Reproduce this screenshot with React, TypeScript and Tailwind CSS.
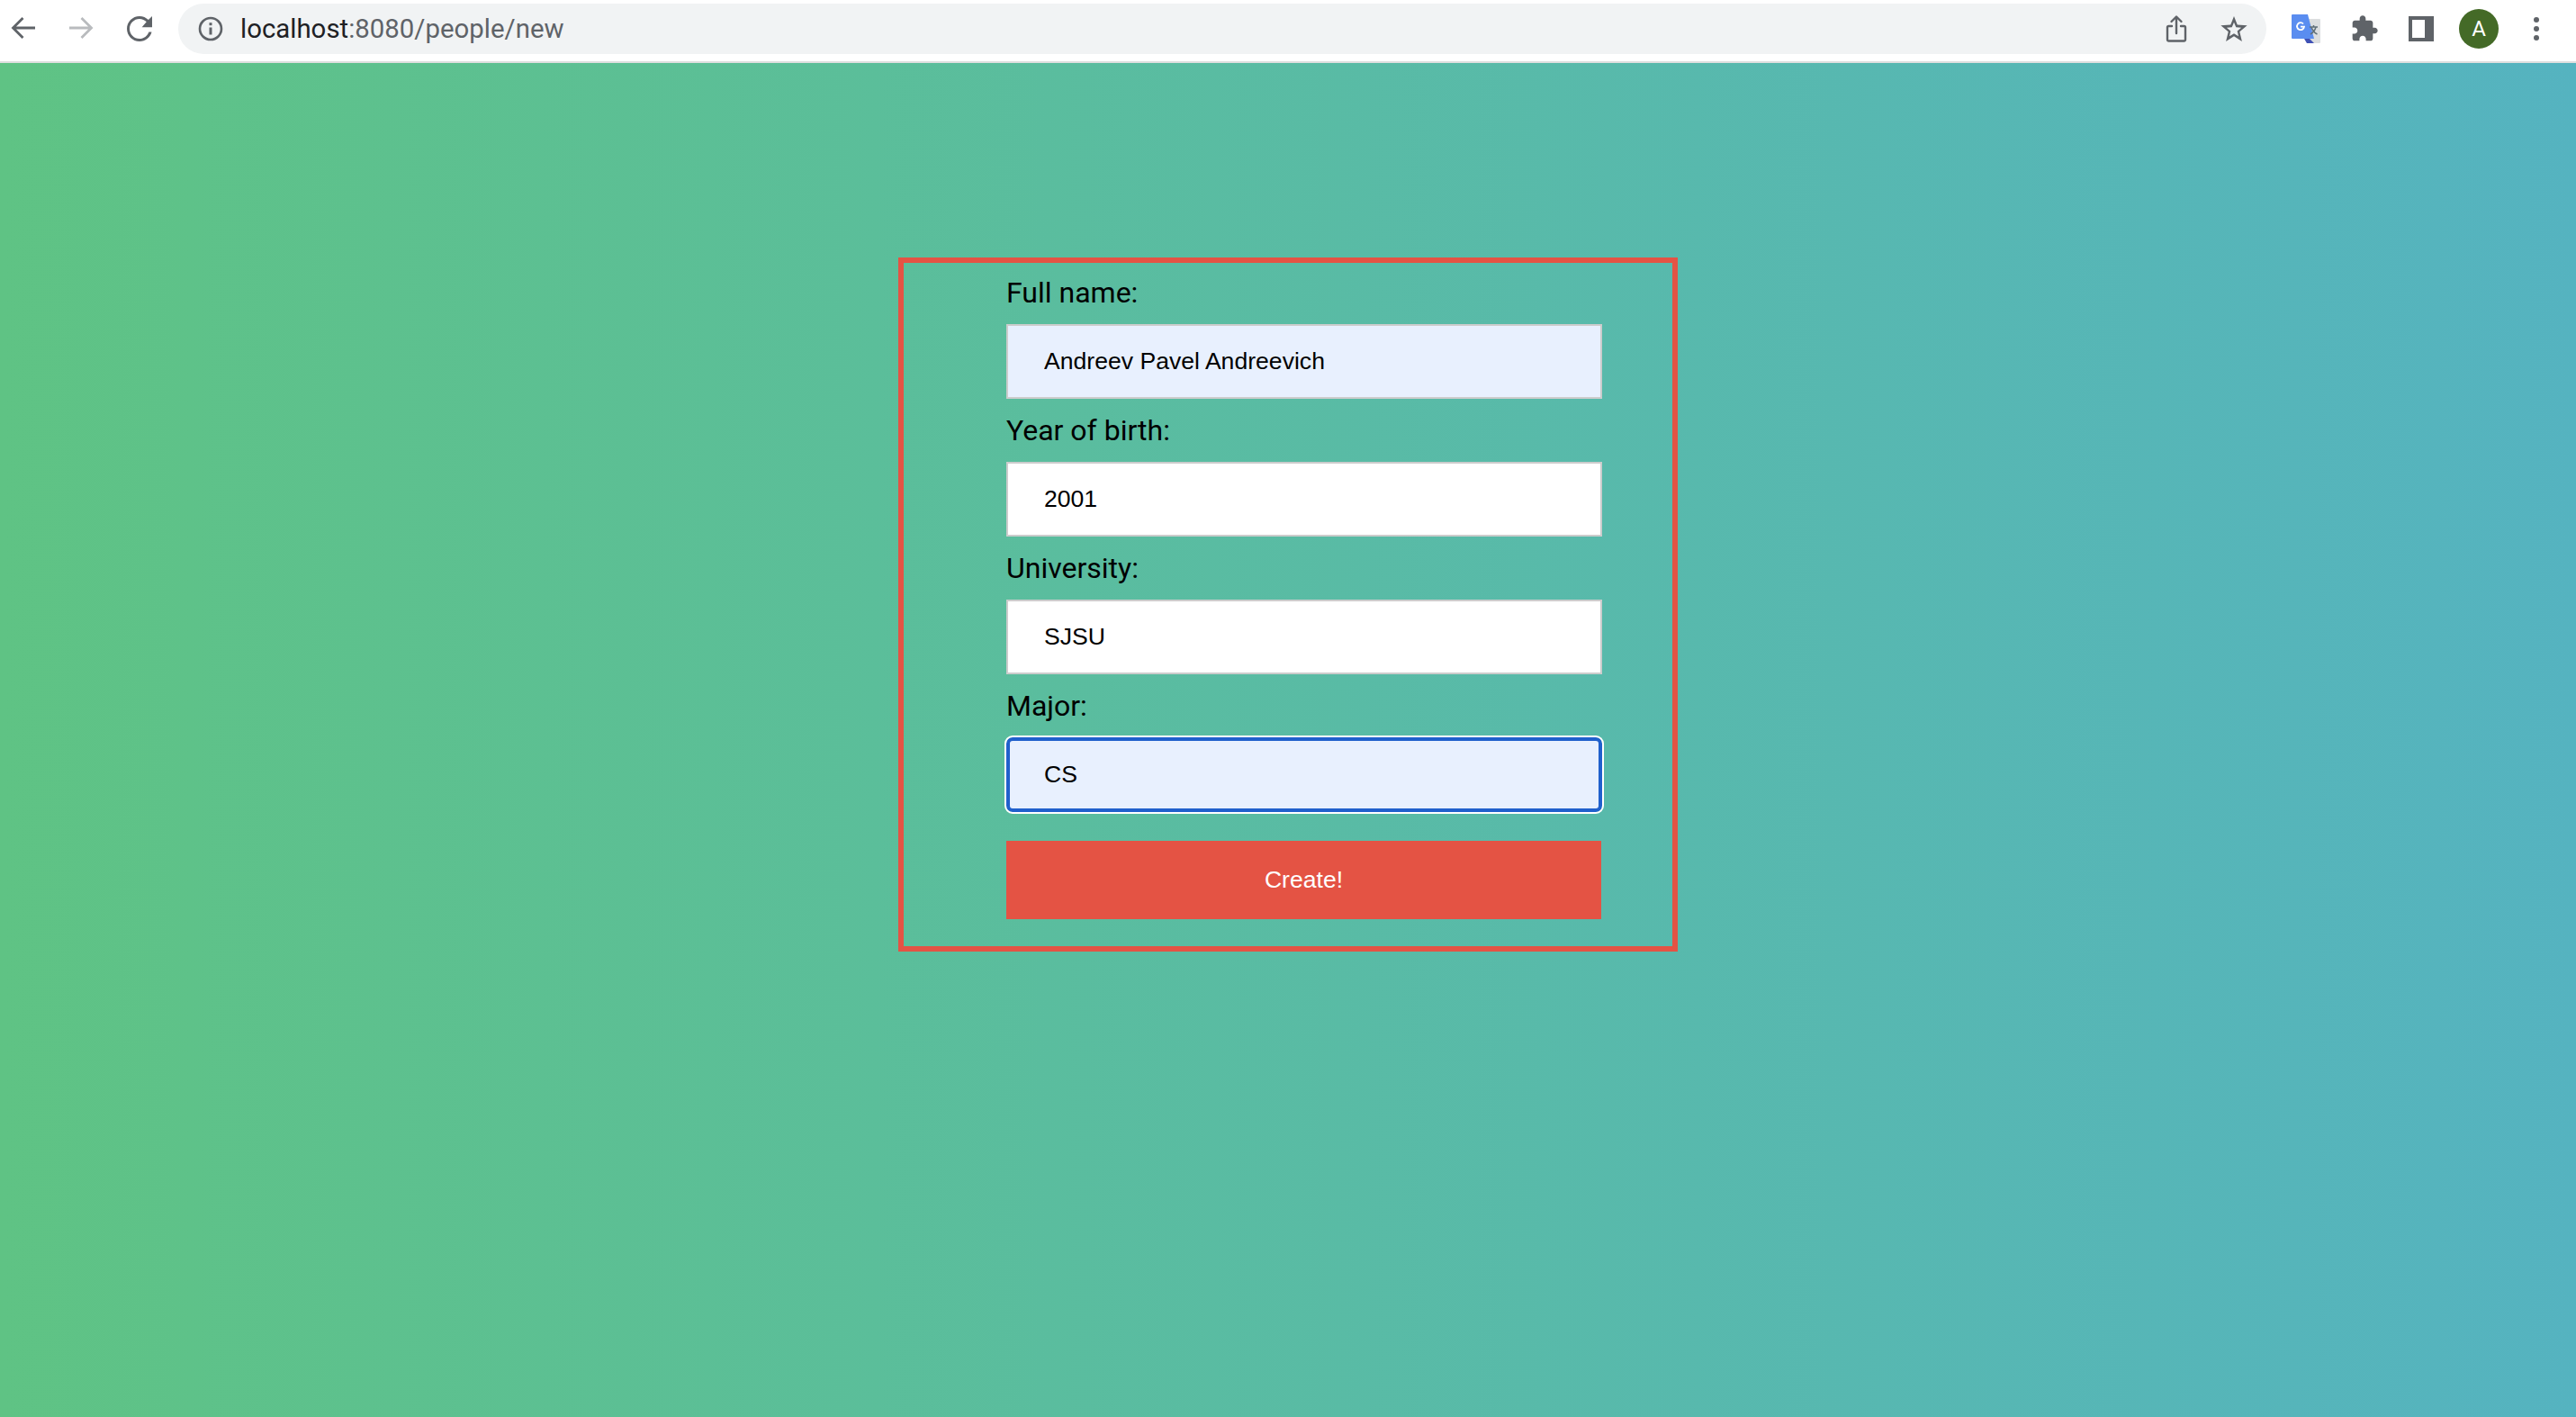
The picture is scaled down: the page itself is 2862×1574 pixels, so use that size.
const fields = [
  { label: 'Full name:', value: 'Andreev Pavel Andreevich', autofilled: true },
  { label: 'Year of birth:', value: '2001', autofilled: false },
  { label: 'University:', value: 'SJSU', autofilled: false },
];

function Toolbar() {
  return (
    <div className="flex h-[70px] items-start border-b-2 border-[#dfdfdf] bg-white">
      <div className="flex h-[68px] w-full items-center pb-1 pl-[10px] pr-[38px]">
        {/* back */}
        <svg viewBox="0 0 32 32" className="h-8 w-8 fill-none stroke-[#5f6368]" strokeWidth="2.8">
          <path d="M29 15H5M15.500 4 4.500 15l11 11" />
        </svg>
        {/* forward */}
        <svg viewBox="0 0 32 32" className="ml-8 h-8 w-8 fill-none stroke-[#b9bbbe]" strokeWidth="2.8">
          <path d="M3 15h24M16.500 4l11 11-11 11" />
        </svg>
        {/* reload */}
        <svg viewBox="4 4 16 16" className="ml-[35px] h-7 w-7 fill-[#5f6368]">
          <path d="M17.650 6.350C16.200 4.900 14.210 4 12 4c-4.420 0-7.990 3.580-7.990 8s3.570 8 7.990 8c3.730 0 6.840-2.550 7.730-6h-1.800c-.82 2.500-3.200 4.300-5.930 4.300-3.480 0-6.300-2.820-6.300-6.300s2.820-6.300 6.300-6.300c1.740 0 3.300.72 4.430 1.870L13.500 11H20V4l-2.350 2.350z" />
        </svg>

        {/* address bar */}
        <div className="ml-[29px] flex h-14 flex-1 items-center rounded-[28px] bg-[#f1f3f4] pl-[22px] pr-5">
          <svg viewBox="0 0 28 28" className="h-7 w-7 fill-none stroke-[#5f6368]">
            <circle cx="14" cy="14" r="12" strokeWidth="2.6" />
            <path d="M14 12.500v8" strokeWidth="3" />
            <path d="M14 7.200v3" strokeWidth="3" />
          </svg>
          <span className="ml-[19px] pt-[2px] font-['Roboto',sans-serif] text-[29.400px] leading-none text-[#202124]">
            localhost<span className="text-[#5f6368]">:8080/people/new</span>
          </span>
          <svg viewBox="0 0 32 32" className="ml-auto h-8 w-8 fill-none stroke-[#5f6368]" strokeWidth="2.4" strokeLinecap="round" strokeLinejoin="round">
            <path d="M11 13H7.500A1.500 1.500 0 0 0 6 14.500V28a1.500 1.500 0 0 0 1.500 1.500h17A1.500 1.500 0 0 0 26 28V14.500A1.500 1.500 0 0 0 24.500 13H21" />
            <path d="M16 21V3M10.500 8 16 2.500 21.500 8" />
          </svg>
          <svg viewBox="0 0 24 24" className="ml-8 h-8 w-8 fill-[#5f6368]">
            <path d="M23 9.240l-8.190-.62L12 1.500 9.190 8.620 1 9.240l6.260 5.230L5.320 22.500 12 18.270l6.680 4.230-1.940-8.030L23 9.240zM12 15.900l-3.760 2.270 1-4.280-3.320-2.880 4.380-.38L12 6.600l1.710 4.040 4.380.38-3.320 2.880 1 4.280L12 15.900z" />
          </svg>
        </div>

        {/* google translate */}
        <svg viewBox="0 0 32 32" className="ml-7 h-8 w-8">
          <path d="M14 5h17a1 1 0 0 1 1 1v25a1 1 0 0 1-1 1H17z" fill="#dcdedf" />
          <path d="M17 32h8l-5-5h-6z" fill="#3f51b5" />
          <path d="M1 0h17l7 27H1a1 1 0 0 1-1-1V1a1 1 0 0 1 1-1z" fill="#5a8df0" />
          <path d="M13 10.500a4 4 0 1 0 1 3.200h-4" fill="none" stroke="#fff" strokeWidth="1.800" />
          <path d="M20 14h9M24.500 12v2M27 14c-1 4-3.500 6.500-6 8M22 14c1 3.500 3.500 6.500 6.500 8" fill="none" stroke="#5f6f78" strokeWidth="1.500" />
        </svg>
        {/* extensions */}
        <svg viewBox="0 0 24 24" className="ml-[33px] h-8 w-8 fill-[#5f6368]">
          <path d="M20.500 11H19V7c0-1.100-.9-2-2-2h-4V3.500C13 2.120 11.880 1 10.500 1S8 2.120 8 3.500V5H4c-1.100 0-1.990.9-1.990 2v3.800H3.500c1.490 0 2.700 1.210 2.700 2.700s-1.210 2.700-2.700 2.700H2V20c0 1.100.9 2 2 2h3.800v-1.500c0-1.490 1.210-2.700 2.700-2.700 1.490 0 2.700 1.210 2.700 2.700V22H17c1.100 0 2-.9 2-2v-4h1.500c1.380 0 2.500-1.120 2.500-2.500S21.880 11 20.500 11z" />
        </svg>
        {/* side panel */}
        <svg viewBox="0 0 32 32" className="ml-[31px] h-8 w-8">
          <path d="M2 2h28v28H2z" fill="#5f6368" />
          <path d="M6 6h14v20H6z" fill="#fff" />
        </svg>
        {/* avatar */}
        <div className="ml-[26px] flex h-11 w-11 items-center justify-center rounded-full bg-[#446a27] font-['Roboto',sans-serif] text-[24px] leading-none text-white">
          A
        </div>
        {/* menu */}
        <div className="ml-9 flex w-3 flex-col items-center gap-1">
          <span className="h-[6px] w-[6px] rounded-full bg-[#5f6368]" />
          <span className="h-[6px] w-[6px] rounded-full bg-[#5f6368]" />
          <span className="h-[6px] w-[6px] rounded-full bg-[#5f6368]" />
        </div>
      </div>
    </div>
  );
}

export default function App() {
  return (
    <div className="flex h-[1574px] w-[2862px] flex-col overflow-hidden">
      <Toolbar />
      <main className="flex-1 bg-gradient-to-r from-[#5fc384] to-[#55b3c0] pt-[216px]">
        <form className="mx-auto h-[771px] w-[866px] border-[6px] border-[#e45344] pl-[114px]">
          {fields.map(f => (
            <div key={f.label}>
              <label className="flex h-[68px] items-center pb-[2px] font-['Roboto',sans-serif] text-[32px] leading-none text-black">
                {f.label}
              </label>
              <input
                readOnly
                defaultValue={f.value}
                className={`mb-[2px] block h-[83px] w-[662px] border-2 border-[#cccccc] pl-10 font-['Liberation_Sans',sans-serif] text-[26.600px] text-black outline-none ${f.autofilled ? 'bg-[#e8f0fe]' : 'bg-white'}`}
              />
            </div>
          ))}
          <div>
            <label className="flex h-[68px] items-center pb-[2px] font-['Roboto',sans-serif] text-[32px] leading-none text-black">
              Major:
            </label>
            <input
              readOnly
              defaultValue="CS"
              className="block h-[83px] w-[662px] rounded-[7px] border-4 border-[#2060cc] bg-[#e8f0fe] pl-[38px] font-['Liberation_Sans',sans-serif] text-[26.600px] text-black outline-2 outline-white"
            />
          </div>
          <button
            type="button"
            className="mt-8 block h-[87px] w-[661px] bg-[#e45344] font-['Liberation_Sans',sans-serif] text-[26.600px] text-white"
          >
            Create!
          </button>
        </form>
      </main>
    </div>
  );
}
